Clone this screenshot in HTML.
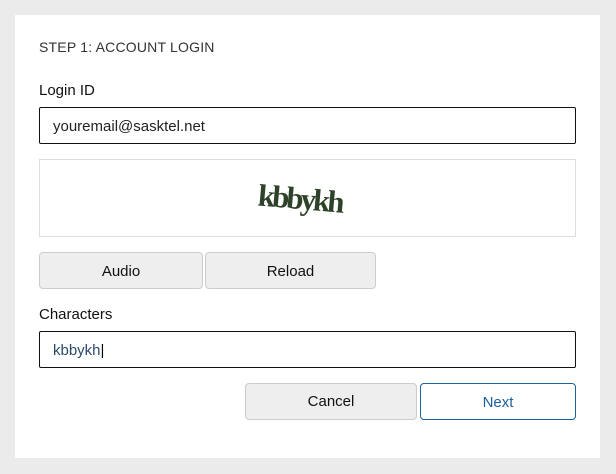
<!DOCTYPE html>
<html><head><style>
body{margin:0;width:616px;height:474px;background:#ebebeb;font-family:"Liberation Sans",sans-serif;position:relative;overflow:hidden}
.p{position:absolute;left:15px;top:15px;width:585px;height:443px;background:#fff}
.a{position:absolute}
.t{font-size:14px;color:#333;left:39px;top:39px;letter-spacing:0.2px}
.l{font-size:15px;color:#111}
.in{border:1px solid #111;border-radius:2px;box-sizing:border-box;background:#fff;font-size:15px;color:#222;padding-left:13px;line-height:37px}
.b{background:#eee;border:1px solid #ccc;border-radius:4px;box-sizing:border-box;text-align:center;font-size:15px;color:#111}
</style></head><body>
<div class="p"></div>
<div class="a t">STEP 1: ACCOUNT LOGIN</div>
<div class="a l" style="left:39px;top:82px">Login ID</div>
<div class="a in" style="left:39px;top:107px;width:537px;height:37px">youremail@sasktel.net</div>
<div class="a" style="left:39px;top:159px;width:537px;height:78px;border:1px solid #ddd;box-sizing:border-box"></div>
<div class="a" style="left:258px;top:181px;font-family:'Liberation Serif',serif;font-size:31px;color:#2d4228;font-weight:bold;letter-spacing:-3px;transform:rotate(5deg)">kbbykh</div>
<div class="a b" style="left:39px;top:252px;width:164px;height:37px;line-height:38px">Audio</div>
<div class="a b" style="left:205px;top:252px;width:171px;height:37px;line-height:38px">Reload</div>
<div class="a l" style="left:39px;top:306px">Characters</div>
<div class="a in" style="left:39px;top:331px;width:537px;height:37px;color:#2a4a6a">kbbykh<span style="color:#000">|</span></div>
<div class="a b" style="left:245px;top:383px;width:172px;height:37px;line-height:36px">Cancel</div>
<div class="a" style="left:420px;top:383px;width:156px;height:37px;border:1px solid #1a5fa0;border-radius:4px;box-sizing:border-box;text-align:center;line-height:38px;font-size:15px;color:#1a5fa0">Next</div>
</body></html>
